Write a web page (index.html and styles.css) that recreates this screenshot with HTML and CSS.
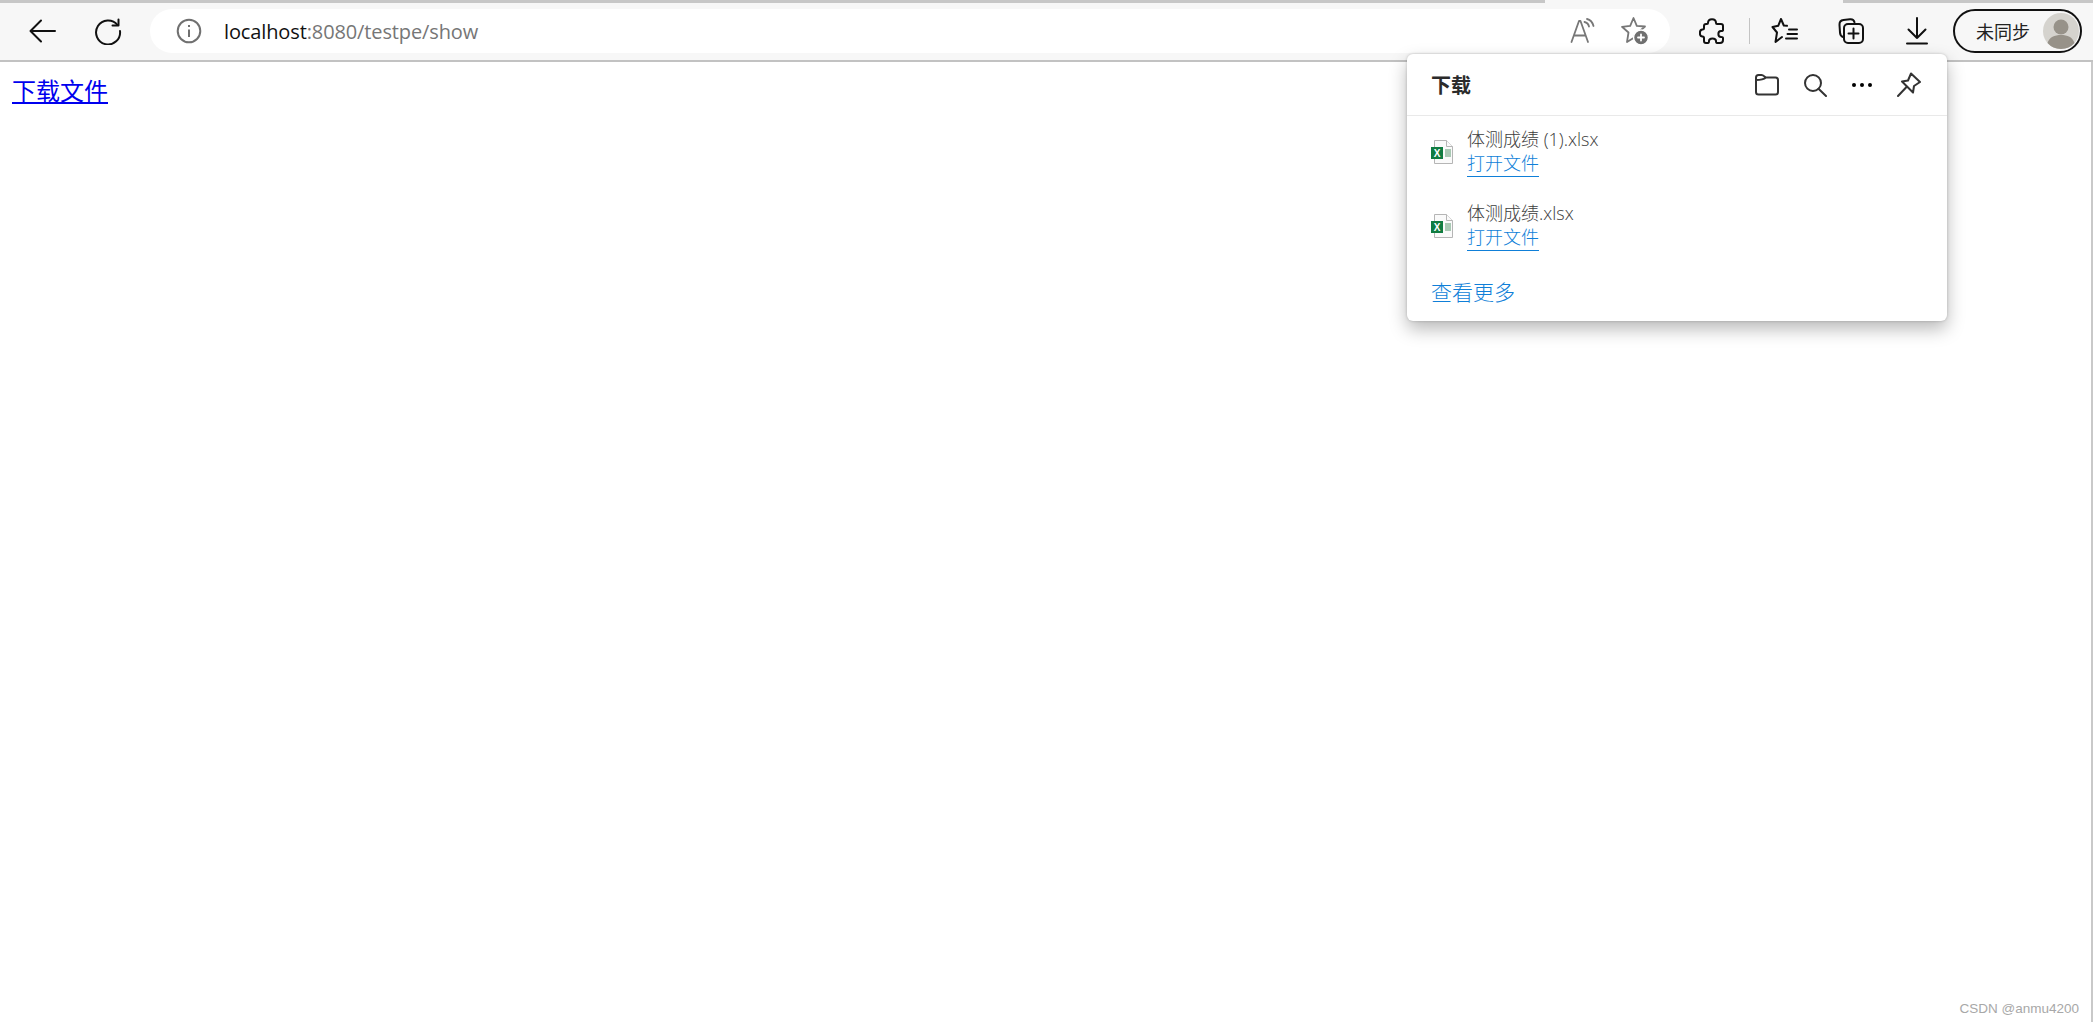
FILE: index.html
```html
<!DOCTYPE html>
<html lang="zh">
<head>
<meta charset="utf-8">
<title>localhost:8080/testpe/show</title>
<link rel="stylesheet" href="styles.css">
</head>
<body>
<div class="tabstrip"><div class="strip-l"></div><div class="strip-tab"></div><div class="strip-r"></div></div>
<header class="toolbar">
  <div class="tool">
    <svg width="28" height="28" viewBox="0 0 28 28" class="ic"><path d="M27 14H3M13 3.500 2.500 14 13 24.500"/></svg>
  </div>
  <div class="tool">
    <svg width="28" height="28" viewBox="0 0 28 28" class="ic"><path d="M23.500 8A12 12 0 1 0 26 14"/><path d="M24.500 2.500V8.500H18.500"/></svg>
  </div>
  <div class="address">
    <svg width="26" height="26" viewBox="0 0 26 26" class="info"><circle cx="13" cy="13" r="11.300"/><path d="M13 11.500V19M13 7V9"/></svg>
    <div class="url"><span class="host">localhost</span>:8080/testpe/show</div>
    <div class="addr-actions">
      <svg width="26" height="26" viewBox="0 0 26 26" class="ic grey"><path d="M1.500 24 9 3h1.500L18 24M4 17.500h11.500"/><path d="M14.500 4c2.500.5 4 2.200 4.500 4.500M17 1c3.500.8 5.500 3.200 6.500 7"/></svg>
      <svg width="30" height="30" viewBox="0 0 30 30" class="ic grey"><path d="M13.500 2 16.800 9.800 25 10.500 18.800 16 20.500 24 13.500 22 7 26 8.500 16.500 2 10.800 10.200 9.800Z"/><circle cx="21" cy="21.500" r="7.500" class="badge"/><path d="M21 18.500v6M18 21.500h6" class="badge-plus"/></svg>
    </div>
  </div>
  <div class="tool tool-ext">
    <svg width="26" height="28" viewBox="0 0 26 28" class="ic strong"><path d="M9 6c0-5 8-5 8 0 0 1 0 1 1 1h4c1.500 0 2 1 2 2v4c0 1-1 1-2 1-3.500 0-3.500 6 0 6 1 0 2 0 2 1v2c0 2-1 3-3 3h-3c-1 0-1-1-1-2 0-3.500-7-3.500-7 0 0 1 0 2-1 2H7c-1.500 0-2-1-2-2v-3c0-1-.5-1.500-1.500-1.500-3.500 0-3.500-7 0-7 1 0 1.500-.5 1.500-1.500V9c0-1.500 1-2 2-2h1c1 0 1-.5 1-1Z"/></svg>
  </div>
  <div class="sep"></div>
  <div class="tool-group">
    <div class="tool">
      <svg width="28" height="28" viewBox="0 0 28 28" class="ic strong"><path d="M16 8.800 12.800 8.500 10 2 7.200 8.800 1.500 10 6 15.500 4.500 25 11 20"/><path d="M18 12.500h8M16.500 17h9.500M15 21.500h11"/></svg>
    </div>
    <div class="tool">
      <svg width="28" height="28" viewBox="0 0 28 28" class="ic strong"><path d="M3 15.500 2.500 8C2.300 5 4 3.300 6.500 3L13 2.300c2.500-.2 4 .7 4.500 3"/><path d="M3 15.500c.2 2.500 1.200 4 3 4.500"/><rect x="7" y="7" width="19" height="19" rx="4"/><path d="M16.500 11.500v10M11.500 16.500h10"/></svg>
    </div>
    <div class="tool">
      <svg width="26" height="28" viewBox="0 0 26 28" class="ic strong"><path d="M13 1v20M4.500 12.500 13 21l8.500-8.500M3 26.500h20"/></svg>
    </div>
  </div>
  <div class="profile">
    <span class="profile-name">未同步</span>
    <svg width="36" height="36" viewBox="0 0 36 36" class="avatar"><circle cx="18" cy="18" r="18" fill="#d5d3ce"/><circle cx="18" cy="14" r="7.500" fill="#979289"/><path d="M4.500 30c2-6 7-8 13.500-8s11.500 2 13.500 8A18 18 0 0 1 18 36 18 18 0 0 1 4.500 30Z" fill="#979289"/></svg>
  </div>
</header>
<main class="page">
  <a class="download-link" href="#">下载文件</a>
</main>
<section class="panel">
  <div class="panel-head">
    <h2 class="panel-title">下载</h2>
    <div class="panel-tools">
      <svg width="24" height="22" viewBox="0 0 24 22" class="ic dark"><path d="M1 6V3.500C1 2 2 1 3.500 1h3C8 1 9.500 2.500 11 3.500h9.500c1.500 0 2.500 1 2.500 2.500v12c0 1.500-1 2.500-2.500 2.500h-17C2 20.500 1 19.500 1 18V6c3 0 7 0 10-2.500"/></svg>
      <svg width="24" height="24" viewBox="0 0 24 24" class="ic dark"><circle cx="10" cy="10" r="8"/><path d="M15.500 15.800 23 23"/></svg>
      <svg width="22" height="6" viewBox="0 0 22 6" class="dots"><circle cx="3" cy="3" r="2"/><circle cx="11" cy="3" r="2"/><circle cx="19" cy="3" r="2"/></svg>
      <svg width="24" height="26" viewBox="0 0 24 26" class="ic dark"><path d="M14 1.500 23 10 17 14 16 20.500 5 9.500 11 8.500ZM9.500 15 1 24"/></svg>
    </div>
  </div>
  <div class="panel-list">
    <div class="file">
      <svg width="22" height="24" viewBox="0 0 22 24" class="xls"><path d="M3.500.5h12l6 6v17h-18Z" class="xls-page"/><path d="M15.500.5v6h6" class="xls-page"/><path d="M14 9h6v8h-6Z" class="xls-cells"/><rect x="0" y="7" width="12" height="12" class="xls-green"/><text x="6" y="16.500" class="xls-x">X</text></svg>
      <div class="file-text">
        <div class="file-name">体测成绩 (1).xlsx</div>
        <a class="file-open" href="#">打开文件</a>
      </div>
    </div>
    <div class="file">
      <svg width="22" height="24" viewBox="0 0 22 24" class="xls"><path d="M3.500.5h12l6 6v17h-18Z" class="xls-page"/><path d="M15.500.5v6h6" class="xls-page"/><path d="M14 9h6v8h-6Z" class="xls-cells"/><rect x="0" y="7" width="12" height="12" class="xls-green"/><text x="6" y="16.500" class="xls-x">X</text></svg>
      <div class="file-text">
        <div class="file-name">体测成绩.xlsx</div>
        <a class="file-open" href="#">打开文件</a>
      </div>
    </div>
  </div>
  <a class="more" href="#">查看更多</a>
</section>
<div class="watermark">CSDN @anmu4200</div>
</body>
</html>
```

FILE: styles.css
```css
* { box-sizing: border-box; }
html, body { margin: 0; height: 100%; }
body {
  position: relative;
  height: 1022px;
  overflow: hidden;
  background: #fff;
  font-family: "Open Sans", "Noto Sans CJK SC", sans-serif;
}
.tabstrip { display: flex; height: 3px; }
.strip-l { width: 1545px; background: #c7c7c7; }
.strip-tab { width: 298px; background: #f7f7f7; }
.strip-r { flex: 1; background: #c7c7c7; }
.toolbar {
  display: flex;
  align-items: center;
  height: 59px;
  padding: 0 0 2px 9px;
  background: #f7f7f7;
  border-bottom: 2px solid #c2c2c2;
}
.tool {
  display: flex;
  align-items: center;
  justify-content: center;
  flex: none;
  width: 66px;
  height: 44px;
}
.tool-ext { margin-left: 9px; }
.tool-group { display: flex; margin-left: 2px; }
.ic { fill: none; stroke: #111; stroke-width: 2; stroke-linecap: round; stroke-linejoin: round; }
.ic.grey { stroke: #777; stroke-width: 1.800; }
.ic.strong { stroke: #111; stroke-width: 2; }
.ic.dark { stroke: #333; stroke-width: 2; }
.info { fill: none; stroke: #707070; stroke-width: 2; margin-left: 26px; flex: none; }
.address {
  display: flex;
  align-items: center;
  flex: none;
  width: 1520px;
  height: 44px;
  margin-left: 9px;
  background: #fff;
  border-radius: 22px;
}
.url {
  margin-left: 22px;
  padding-top: 1px;
  font-size: 20px;
  letter-spacing: -0.12px;
  color: #767676;
  white-space: nowrap;
}
.host { color: #111; }
.addr-actions {
  display: flex;
  align-items: center;
  gap: 24px;
  margin-left: auto;
  margin-right: 20px;
}
.badge { fill: #6f6f6f; stroke: #fff; stroke-width: 1.500; }
.badge-plus { stroke: #fff; stroke-width: 1.800; }
.sep { flex: none; width: 1px; height: 26px; margin-left: 4px; background: #c4c4c4; }
.profile {
  display: flex;
  align-items: center;
  justify-content: space-between;
  flex: none;
  width: 129px;
  height: 44px;
  margin-left: 3px;
  padding: 0 1px 0 21px;
  background: #f7f7f7;
  border: 2px solid #111;
  border-radius: 22px;
}
.profile-name { font-size: 18px; color: #222; }
.page { padding: 11px 12px 0; height: 960px; border-right: 2px solid #c9c9c9; }
.download-link {
  font-family: "Noto Sans CJK SC", sans-serif;
  font-size: 24px;
  line-height: 34px;
  color: #0000ee;
  text-decoration: underline;
}
.panel {
  position: absolute;
  left: 1407px;
  top: 54px;
  width: 540px;
  height: 267px;
  background: #fff;
  border-radius: 6px;
  box-shadow: 0 8px 18px rgba(0, 0, 0, 0.28), 0 0 3px rgba(0, 0, 0, 0.2);
}
.panel-head {
  display: flex;
  align-items: center;
  justify-content: space-between;
  height: 62px;
  padding: 0 26px 0 24px;
  border-bottom: 1px solid #e9e9e9;
}
.panel-title {
  margin: 0;
  font-family: "Noto Sans CJK SC", sans-serif;
  font-size: 20px;
  font-weight: 700;
  color: #2b2b2b;
}
.panel-tools { display: flex; align-items: center; gap: 24px; }
.panel-tools > .dark:first-child { margin-right: 0; }
.panel-list { display: flex; flex-direction: column; gap: 24px; padding-top: 11px; }
.file { display: flex; align-items: center; gap: 14px; padding-left: 24px; }
.xls { flex: none; }
.xls-page { fill: #fafafa; stroke: #b5b5b5; stroke-width: 1; }
.xls-cells { fill: #a9c9b4; }
.xls-green { fill: #107c41; }
.xls-x { fill: #fff; font-family: "Liberation Sans", sans-serif; font-size: 10px; font-weight: 700; text-anchor: middle; }
.file-text { display: flex; flex-direction: column; align-items: flex-start; }
.file-name { font-size: 18px; line-height: 24px; font-weight: 300; color: #3d3d3d; white-space: nowrap; }
.file-open {
  font-size: 18px;
  line-height: 24px;
  height: 26px;
  font-weight: 300;
  color: #0f7fd8;
  text-decoration: none;
  border-bottom: 1.500px solid #0f7fd8;
}
.more {
  display: block;
  margin: 27px 0 0 24px;
  font-size: 21px;
  line-height: 28px;
  font-weight: 300;
  color: #0f7fd8;
  text-decoration: none;
}
.watermark {
  position: absolute;
  right: 14px;
  bottom: 6px;
  font-family: "Liberation Sans", sans-serif;
  font-size: 13.500px;
  color: #a8a8a8;
}
```
